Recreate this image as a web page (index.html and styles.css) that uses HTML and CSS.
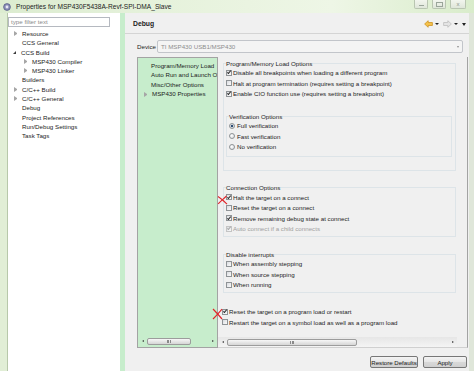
FILE: index.html
```html
<!DOCTYPE html>
<html lang="en">
<head>
  <meta charset="UTF-8" />
  <title>Properties for MSP430F5438A-Revf-SPI-DMA_Slave</title>
  <link rel="stylesheet" href="styles.css">
</head>
<body>
<div class="window">

  <!-- Title bar -->
  <div class="titlebar">
    <svg class="app-icon" viewBox="0 0 8 8">
      <circle cx="4" cy="4" r="3.4" fill="#8c8fb8" stroke="#4d5380" stroke-width="0.7"/>
      <circle cx="4" cy="4" r="1.4" fill="#e8e8f4"/>
    </svg>
    <span class="title">Properties for MSP430F5438A-Revf-SPI-DMA_Slave</span>
    <div class="caption-btns">
      <span class="cap cap-min"><i></i></span>
      <span class="cap cap-max"><i></i></span>
      <span class="cap cap-close">x</span>
    </div>
  </div>

  <div class="main">
    <div class="frame-left"></div>

    <!-- Property page tree -->
    <div class="nav">
      <div class="filter">type filter text</div>
      <ul class="tree">
        <li><span class="tw closed"></span>Resource</li>
        <li><span class="tw"></span>CCS General</li>
        <li><span class="tw open"></span>CCS Build</li>
        <li class="child"><span class="tw closed"></span>MSP430 Compiler</li>
        <li class="child"><span class="tw closed"></span>MSP430 Linker</li>
        <li><span class="tw"></span>Builders</li>
        <li><span class="tw closed"></span>C/C++ Build</li>
        <li><span class="tw closed"></span>C/C++ General</li>
        <li><span class="tw"></span>Debug</li>
        <li><span class="tw"></span>Project References</li>
        <li><span class="tw"></span>Run/Debug Settings</li>
        <li><span class="tw"></span>Task Tags</li>
      </ul>
    </div>

    <div class="sash"></div>

    <!-- Debug page -->
    <div class="page">
      <div class="page-head">
        <span class="page-title">Debug</span>
        <div class="nav-arrows">
          <svg class="arrow" viewBox="0 0 9 8">
            <path d="M0.6 4 L4.2 0.7 L4.2 2.5 L8.4 2.5 L8.4 5.5 L4.2 5.5 L4.2 7.3 Z" fill="#f5c24a" stroke="#c98a12" stroke-width="0.7"/>
          </svg>
          <span class="drop-tri"></span>
          <svg class="arrow" viewBox="0 0 9 8">
            <path d="M8.4 4 L4.8 0.7 L4.8 2.5 L0.6 2.5 L0.6 5.5 L4.8 5.5 L4.8 7.3 Z" fill="#e4e4e4" stroke="#b8b8b8" stroke-width="0.7"/>
          </svg>
          <span class="drop-tri"></span>
          <span class="drop-tri menu"></span>
        </div>
      </div>

      <div class="device-row">
        <span class="device-label">Device</span>
        <div class="combo">TI MSP430 USB1/MSP430<span class="combo-arrow"></span></div>
      </div>

      <div class="split">
        <div class="cat-panel">
          <ul class="cats">
            <li class="sel">Program/Memory Load</li>
            <li>Auto Run and Launch Options</li>
            <li>Misc/Other Options</li>
            <li><span class="tw closed"></span>MSP430 Properties</li>
          </ul>
          <div class="hscroll">
            <span class="sb-btn left"></span>
            <span class="thumb" style="width:44px"><i></i></span>
            <span class="sb-track"></span>
            <span class="sb-btn right"></span>
          </div>
        </div>

        <div class="opt-panel">
          <div class="opt-body">
            <fieldset class="grp grp-load">
              <legend>Program/Memory Load Options</legend>
              <div class="row"><span class="cb on"></span>Disable all breakpoints when loading a different program</div>
              <div class="row"><span class="cb"></span>Halt at program termination (requires setting a breakpoint)</div>
              <div class="row"><span class="cb on"></span>Enable CIO function use (requires setting a breakpoint)</div>

              <fieldset class="grp grp-verify">
                <legend>Verification Options</legend>
                <div class="row"><span class="rb on"></span>Full verification</div>
                <div class="row"><span class="rb"></span>Fast verification</div>
                <div class="row"><span class="rb"></span>No verification</div>
              </fieldset>
            </fieldset>

            <fieldset class="grp grp-connect">
              <legend>Connection Options</legend>
              <div class="row"><span class="cb on"></span>Halt the target on a connect</div>
              <div class="row"><span class="cb"></span>Reset the target on a connect</div>
              <div class="row"><span class="cb on"></span>Remove remaining debug state at connect</div>
              <div class="row disabled"><span class="cb on"></span>Auto connect if a child connects</div>
            </fieldset>

            <fieldset class="grp grp-irq">
              <legend>Disable interrupts</legend>
              <div class="row"><span class="cb"></span>When assembly stepping</div>
              <div class="row"><span class="cb"></span>When source stepping</div>
              <div class="row"><span class="cb"></span>When running</div>
            </fieldset>

            <div class="loose">
              <div class="row"><span class="cb on"></span>Reset the target on a program load or restart</div>
              <div class="row"><span class="cb"></span>Restart the target on a symbol load as well as a program load</div>
            </div>
          </div>
          <div class="scroll-line">
            <div class="hscroll">
              <span class="sb-btn left"></span>
              <span class="thumb" style="width:130px"><i></i></span>
              <span class="sb-track"></span>
              <span class="sb-btn right"></span>
            </div>
            <span class="corner"></span>
          </div>
        </div>
      </div>

      <div class="buttons">
        <button class="btn btn-restore">Restore Defaults</button>
        <button class="btn btn-apply">Apply</button>
      </div>
    </div>

    <div class="frame-right"></div>
  </div>

  <!-- hand drawn marks on the screenshot -->
  <svg class="mark mark-1" viewBox="0 0 11 10">
    <path d="M1 1.5 C4 3.5 7 6 10 9.2" stroke="#e0262a" stroke-width="1.1" fill="none"/>
    <path d="M9.5 1 C7 3.5 4 6 1.2 8.8" stroke="#e0262a" stroke-width="1.1" fill="none"/>
  </svg>
  <svg class="mark mark-2" viewBox="0 0 11 12">
    <path d="M1 1 C4 4 7 7.5 10 11" stroke="#e0262a" stroke-width="1.2" fill="none"/>
    <path d="M10 1.2 C7 4.5 4 8 1 11" stroke="#e0262a" stroke-width="1.2" fill="none"/>
  </svg>
</div>
</body>
</html>
```

FILE: styles.css
```css
body {
  margin: 0;
  font-family: 'Liberation Sans', Arial, sans-serif;
  font-size: 6.2px;
  color: #1c1c1c;
}

ul {
  list-style: none;
  margin: 0;
  padding: 0;
}

.window {
  position: relative;
  width: 474px;
  height: 371px;
  display: flex;
  flex-direction: column;
  background: #e1eed6;
  overflow: hidden;
}

/* title bar */
.titlebar {
  height: 13px;
  flex: none;
  display: flex;
  align-items: center;
  background: linear-gradient(90deg, #dcecd0, #e6f2dc 35%, #eef6e6 70%, #d9eccb);
}

.app-icon {
  width: 8px;
  height: 8px;
  margin-left: 3px;
}

.title {
  margin-left: 5px;
  font-size: 6.6px;
  color: #222;
}

.caption-btns {
  margin-left: auto;
  margin-right: 8px;
  align-self: flex-start;
  display: flex;
  gap: 4px;
}

.cap {
  width: 12px;
  height: 8px;
  border: 1px solid #b9c5b1;
  border-top: none;
  border-radius: 0 0 2px 2px;
  background: linear-gradient(#f2f5ee, #dfe6da);
  display: flex;
  align-items: center;
  justify-content: center;
  color: #8a948a;
  font-size: 6px;
  line-height: 1;
}

.cap-min i {
  width: 5px;
  height: 1px;
  margin-top: 3px;
  background: #9aa59a;
}

.cap-max i {
  width: 5px;
  height: 3px;
  border: 1px solid #9aa59a;
}

.cap-close {
  width: 14px;
}

.main {
  flex: 1;
  display: flex;
  min-height: 0;
}

.frame-left {
  width: 7px;
  flex: none;
}

.frame-right {
  width: 5px;
  flex: none;
  background: #dfe6d9;
}

/* left tree */
.nav {
  width: 112px;
  flex: none;
  background: #ffffff;
  border-left: 1px solid #b7c8aa;
}

.filter {
  width: 98px;
  height: 8px;
  margin-top: 4px;
  border: 1px solid #b5b9c0;
  padding-left: 2px;
  line-height: 8px;
  color: #8a8a8a;
}

.tree {
  margin-top: 2px;
}

.tree li {
  height: 9.3px;
  line-height: 9.3px;
  display: flex;
  align-items: center;
  padding-left: 6px;
}

.tree li.child {
  padding-left: 16px;
}

.tw {
  width: 4px;
  height: 5px;
  margin-right: 4px;
  flex: none;
  box-sizing: border-box;
}

.tw.closed {
  border-style: solid;
  border-color: transparent transparent transparent #a6a6a6;
  border-width: 2.5px 0 2.5px 3px;
}

.tw.open {
  width: 0;
  height: 0;
  border-style: solid;
  border-width: 3px 3px 0 0;
  border-color: transparent #3c3c3c transparent transparent;
  margin-right: 5px;
  margin-left: -1px;
}

.sash {
  width: 5px;
  flex: none;
  background: #c7edcc;
}

/* page */
.page {
  flex: 1;
  display: flex;
  flex-direction: column;
  background: #f0f0f0;
}

.page-head {
  height: 20px;
  flex: none;
  display: flex;
  align-items: center;
  padding-left: 8px;
  border-bottom: 1px solid #d4d4d4;
}

.page-title {
  font-weight: bold;
  font-size: 6.8px;
  margin-top: 1px;
}

.nav-arrows {
  margin-left: auto;
  margin-right: 3px;
  display: flex;
  align-items: center;
  gap: 2px;
  margin-top: 2px;
}

.arrow {
  width: 9px;
  height: 8px;
}

.drop-tri {
  width: 0;
  height: 0;
  border-style: solid;
  border-width: 2.5px 2px 0 2px;
  border-color: #222 transparent transparent transparent;
  margin-right: 2px;
}

.drop-tri.menu {
  border-width: 3px 2.5px 0 2.5px;
  margin-right: 0;
}

.device-row {
  margin-top: 6px;
  height: 13px;
  display: flex;
  align-items: center;
  padding-left: 12px;
}

.device-label {
  width: 20px;
}

.combo {
  width: 301px;
  height: 11px;
  border: 1px solid #c2c5ca;
  border-radius: 2px;
  background: #f4f4f4;
  color: #8d8d8d;
  padding-left: 3px;
  line-height: 11px;
  display: flex;
  align-items: center;
}

.combo-arrow {
  margin-left: auto;
  margin-right: 3px;
  width: 0;
  height: 0;
  border-style: solid;
  border-width: 2px 1.5px 0 1.5px;
  border-color: #8d8d8d transparent transparent transparent;
}

.split {
  margin: 4px 1px 0 12px;
  height: 291px;
  flex: none;
  display: flex;
}

.cat-panel {
  width: 79px;
  flex: none;
  border: 1px solid #a3a3a3;
  background: #c7edcc;
  display: flex;
  flex-direction: column;
}

.cats {
  flex: 1;
  padding-top: 2.5px;
  overflow: hidden;
}

.cats li {
  height: 9.6px;
  line-height: 9.6px;
  padding-left: 13px;
  white-space: nowrap;
  display: flex;
  align-items: center;
}

.cats li .tw {
  margin-left: -7px;
  margin-right: 4px;
}

.cat-panel .hscroll {
  flex: none;
  margin-bottom: 1px;
  background: #c7edcc;
}

.opt-panel {
  flex: 1;
  display: flex;
  flex-direction: column;
  border-right: 1px solid #a3a3a3;
  border-bottom: 1px solid #d0d0d0;
  min-width: 0;
}

.opt-body {
  flex: 1;
  padding-left: 4px;
  padding-right: 11px;
  overflow: hidden;
}

.row {
  height: 10.5px;
  display: flex;
  align-items: center;
  white-space: nowrap;
}

.row.disabled {
  color: #a0a0a0;
}

.cb {
  position: relative;
  width: 4px;
  height: 4px;
  margin-right: 1px;
  flex: none;
  border: 1px solid #8f9396;
  background: linear-gradient(135deg, #d9dce0, #fbfbfb);
}

.cb.on::after {
  content: "";
  position: absolute;
  left: 1px;
  top: -0.5px;
  width: 1.3px;
  height: 3px;
  border: solid #2b2b2b;
  border-width: 0 1px 1px 0;
  transform: rotate(40deg);
}

.row.disabled .cb {
  border-color: #c4c4c4;
}

.row.disabled .cb.on::after {
  border-color: #a8a8a8;
}

.rb {
  width: 4px;
  height: 4px;
  margin-right: 2px;
  flex: none;
  border: 1px solid #8f9396;
  border-radius: 50%;
  background: radial-gradient(circle at 40% 40%, #ffffff, #d6d9dc);
}

.rb.on {
  background: radial-gradient(circle, #2d4c73 0 1.3px, #dfe3e8 1.6px);
}

.grp {
  border: 1px solid #dde4e8;
  margin: 0;
  padding: 0 0 0 2px;
  min-width: 0;
}

.grp legend {
  padding: 0;
  line-height: 9px;
  height: 9px;
}

.grp-load {
  margin: 1.5px 0 0 1px;
  padding-bottom: 13px;
}

.grp-verify {
  margin: 12.5px 3px 0 0;
  padding-bottom: 3.5px;
}

.grp-connect {
  margin: 12.5px 0 0 1px;
  padding-bottom: 2px;
}

.grp-irq {
  margin: 12.5px 0 0 1px;
  padding-bottom: 2px;
}

.loose {
  margin-top: 13.25px;
}

/* scrollbars */
.scroll-line {
  display: flex;
  height: 10px;
  flex: none;
}

.hscroll {
  height: 10px;
  flex: 1;
  display: flex;
  align-items: center;
  background: linear-gradient(#e6e6e6, #f4f4f4);
}

.corner {
  width: 10px;
  background: #f0f0f0;
}

.sb-btn {
  width: 9px;
  height: 9px;
  flex: none;
  display: flex;
  align-items: center;
  justify-content: center;
}

.sb-btn::after {
  content: "";
  width: 0;
  height: 0;
  border-style: solid;
}

.sb-btn.left::after {
  border-width: 1.5px 2px 1.5px 0;
  border-color: transparent #404040 transparent transparent;
}

.sb-btn.right::after {
  border-width: 1.5px 0 1.5px 2px;
  border-color: transparent transparent transparent #404040;
}

.thumb {
  height: 7px;
  flex: none;
  box-sizing: border-box;
  border: 1px solid #9c9c9c;
  border-radius: 2px;
  background: linear-gradient(#f7f7f7, #e4e4e4 55%, #d6d6d6);
  display: flex;
  align-items: center;
  justify-content: center;
}

.thumb i {
  width: 4px;
  height: 3px;
  background: repeating-linear-gradient(90deg, #8a8a8a 0 1px, transparent 1px 1.5px);
}

.sb-track {
  flex: 1;
}

/* dialog buttons */
.buttons {
  display: flex;
  justify-content: flex-end;
  gap: 5px;
  padding: 8px 2px 0 0;
}

.btn {
  height: 12px;
  padding: 0;
  font-family: inherit;
  font-size: 6.1px;
  white-space: nowrap;
  color: #1c1c1c;
  border: 1px solid #777;
  border-radius: 2px;
  background: linear-gradient(#f4f4f4, #e6e6e6 48%, #d8d8d8 52%, #d0d0d0);
}

.btn-restore {
  width: 48px;
}

.btn-apply {
  width: 44px;
}

/* red marks */
.mark {
  position: absolute;
}

.mark-1 {
  left: 217px;
  top: 195px;
  width: 11px;
  height: 10px;
}

.mark-2 {
  left: 212px;
  top: 308px;
  width: 11px;
  height: 12px;
}
```
